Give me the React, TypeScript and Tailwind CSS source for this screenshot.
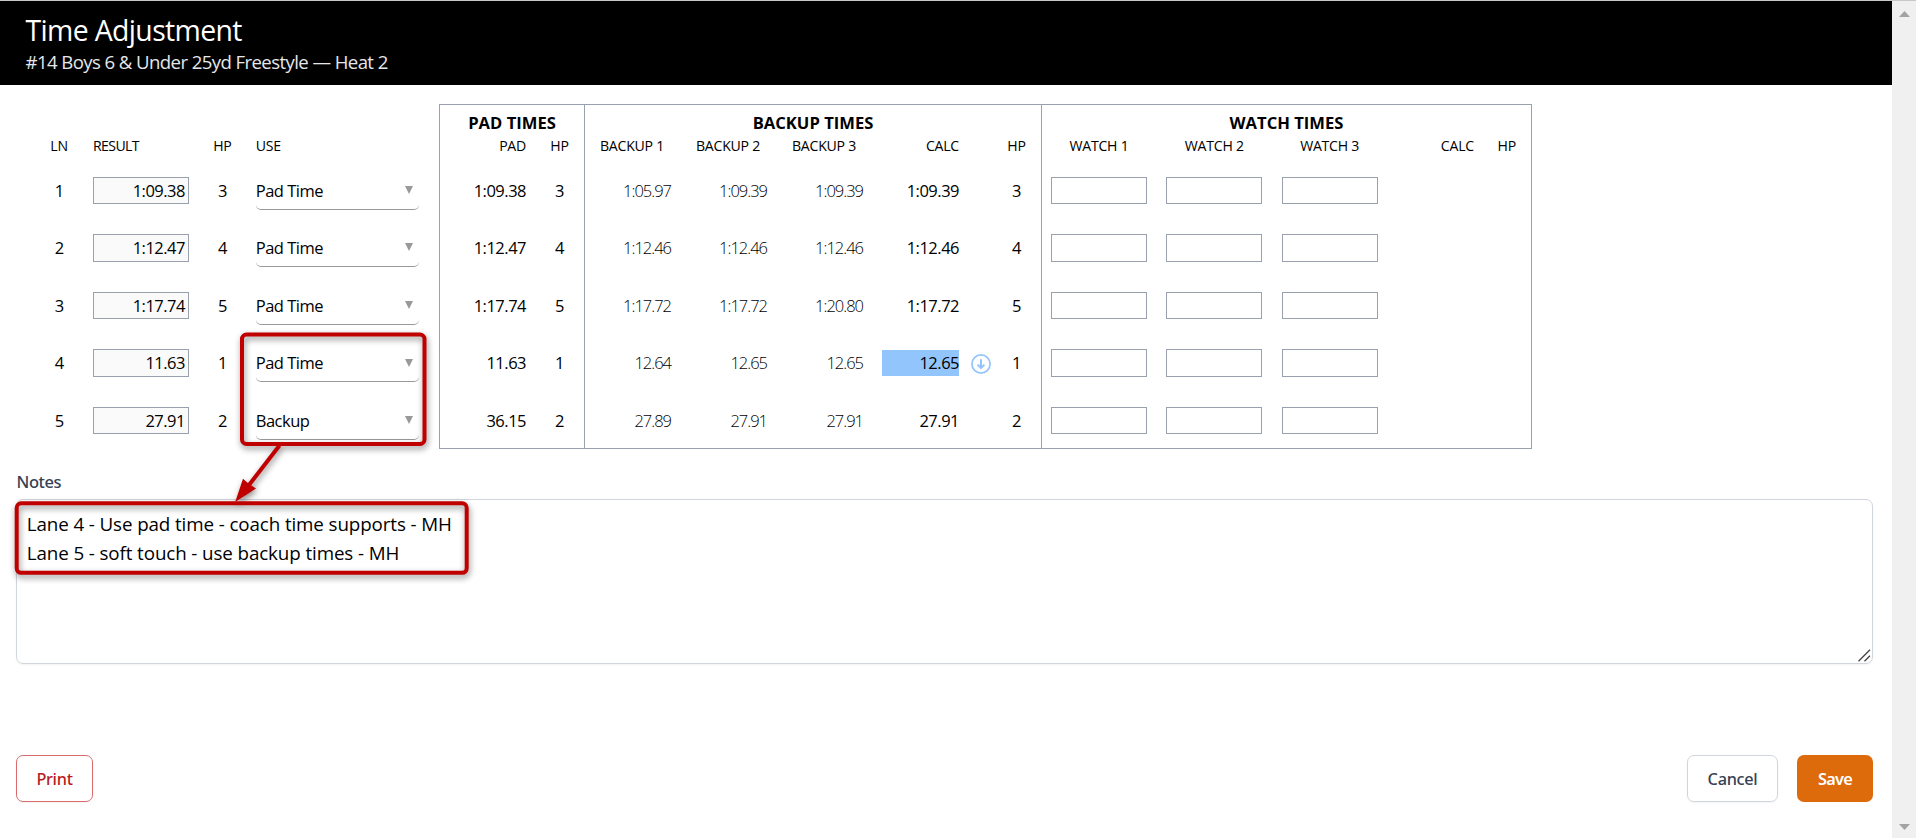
import React from "react";

type Lane = {
  ln: number;
  result: string;
  hp: number;
  use: string;
  pad: string;
  backups: [string, string, string];
  calc: string;
  flagged?: boolean;
};

const lanes: Lane[] = [
  { ln: 1, result: "1:09.38", hp: 3, use: "Pad Time", pad: "1:09.38", backups: ["1:05.97", "1:09.39", "1:09.39"], calc: "1:09.39" },
  { ln: 2, result: "1:12.47", hp: 4, use: "Pad Time", pad: "1:12.47", backups: ["1:12.46", "1:12.46", "1:12.46"], calc: "1:12.46" },
  { ln: 3, result: "1:17.74", hp: 5, use: "Pad Time", pad: "1:17.74", backups: ["1:17.72", "1:17.72", "1:20.80"], calc: "1:17.72" },
  { ln: 4, result: "11.63", hp: 1, use: "Pad Time", pad: "11.63", backups: ["12.64", "12.65", "12.65"], calc: "12.65", flagged: true },
  { ln: 5, result: "27.91", hp: 2, use: "Backup", pad: "36.15", backups: ["27.89", "27.91", "27.91"], calc: "27.91" },
];

const LEFT = "grid grid-cols-[33px_96px_32px_163px] gap-x-[17.4px] pl-[42.6px]";
const PAD = "grid grid-cols-[86px_33px] gap-x-[17px]";
const BACKUP = "grid grid-cols-[78px_96px_96px_96px_44px_27px] pl-2";
const WATCH = "grid grid-cols-[96px_96px_96px_77px_27px] gap-x-[19.3px] pl-[9px]";

const heading = "h-[23px] items-center text-[14.1px] leading-none tracking-[-0.25px]";
const row = "h-[57.6px] items-center text-[16.5px] leading-none tracking-[-0.5px]";

function Section({ title, className, children }: { title?: string; className: string; children: React.ReactNode }) {
  return (
    <section className={`h-[345px] shrink-0 border-t pt-[7px] ${className}`}>
      <h2 className="flex h-[23px] items-center justify-center text-[16.6px] leading-none font-bold">{title}</h2>
      {children}
    </section>
  );
}

function Caret() {
  return (
    <svg className="mr-[6px] mb-[2px] size-2" viewBox="0 0 8 8">
      <path d="M0 0h8L4 8z" fill="#999" />
    </svg>
  );
}

function Annotations() {
  return (
    <svg className="pointer-events-none absolute top-0 left-0 h-[620px] w-[500px]" viewBox="0 0 500 620" fill="none">
      <g stroke="#c00000" strokeWidth="4" style={{ filter: "drop-shadow(1px 3px 3px rgba(0,0,0,0.45))" }}>
        <rect x="242" y="334.5" width="182.5" height="109.5" rx="4.5" />
        <rect x="16.7" y="503.3" width="450" height="69.5" rx="4.5" />
        <path d="M279.5 445.5L249 485" />
        <path d="M235.2 502l7.8-23.2 5.4 4.8 7.6 5z" fill="#c00000" stroke="none" />
      </g>
    </svg>
  );
}

export default function App() {
  return (
    <div className="relative flex h-[838px] w-full flex-col overflow-hidden border-t border-[#c8c8c8] bg-white font-['Open_Sans','Noto_Sans',sans-serif] text-black">
      <div className="flex min-h-0 flex-1">
        <main className="flex min-w-0 flex-1 flex-col">
          <header className="h-[84px] shrink-0 bg-black pl-[25.5px] text-white">
            <h1 className="pt-[12px] text-[28.4px] leading-[34px] tracking-[-0.63px]">Time Adjustment</h1>
            <p className="text-[18.6px] leading-[29px] tracking-[-0.59px] text-gray-200">
              #14 Boys 6 &amp; Under 25yd Freestyle — Heat 2
            </p>
          </header>

          <div className="flex pt-[19px]">
            <Section className="w-[439px] border-transparent">
              <div className={`${LEFT} ${heading}`}>
                <span className="text-center">LN</span>
                <span className="tracking-[-0.6px]">RESULT</span>
                <span className="text-center">HP</span>
                <span>USE</span>
              </div>
              <div className="pt-[3.5px]">
                {lanes.map((l) => (
                  <div key={l.ln} className={`${LEFT} ${row}`}>
                    <span className="pt-px text-center">{l.ln}</span>
                    <span className="flex h-[27.4px] items-center justify-end border border-gray-400 bg-[#fafafa] pt-px pr-[3px]">{l.result}</span>
                    <span className="pt-px text-center">{l.hp}</span>
                    <span className="flex h-[38.6px] items-center justify-between rounded-[5px] border-b border-[#999] pt-[2px]">
                      {l.use}
                      <Caret />
                    </span>
                  </div>
                ))}
              </div>
            </Section>

            <Section title="PAD TIMES" className="w-[145px] border-b border-l border-gray-400">
              <div className={`${PAD} ${heading}`}>
                <span className="text-right">PAD</span>
                <span className="text-center">HP</span>
              </div>
              <div className="pt-[3.5px]">
                {lanes.map((l) => (
                  <div key={l.ln} className={`${PAD} ${row}`}>
                    <span className="pt-px text-right">{l.pad}</span>
                    <span className="pt-px text-center">{l.hp}</span>
                  </div>
                ))}
              </div>
            </Section>

            <Section title="BACKUP TIMES" className="w-[457px] border-b border-l border-gray-400">
              <div className={`${BACKUP} ${heading}`}>
                <span className="text-center">BACKUP 1</span>
                <span className="pl-[18px] text-center">BACKUP 2</span>
                <span className="pl-[18px] text-center">BACKUP 3</span>
                <span className="text-right">CALC</span>
                <span />
                <span className="text-center">HP</span>
              </div>
              <div className="pt-[3.5px]">
                {lanes.map((l) => (
                  <div key={l.ln} className={`${BACKUP} ${row}`}>
                    {l.backups.map((t, i) => (
                      <span key={i} className="pt-px text-right font-light tracking-[-1px]">
                        {t}
                      </span>
                    ))}
                    <span className={`flex h-[26px] w-[77px] items-center justify-end justify-self-end pt-px ${l.flagged ? "bg-[#93c5fd]" : ""}`}>{l.calc}</span>
                    <span className="flex justify-center">
                      {l.flagged && (
                        <svg className="mt-[2px] size-5" viewBox="0 0 20 20" fill="none" stroke="#93c5fd" strokeWidth="1.7">
                          <circle cx="10" cy="10" r="9.1" />
                          <path d="M10 5.3v8.4M6.6 10.6l3.4 3.4 3.4-3.4" strokeWidth="2" />
                        </svg>
                      )}
                    </span>
                    <span className="pt-px text-center">{l.hp}</span>
                  </div>
                ))}
              </div>
            </Section>

            <Section title="WATCH TIMES" className="w-[491px] border-x border-b border-gray-400">
              <div className={`${WATCH} ${heading}`}>
                <span className="text-center">WATCH 1</span>
                <span className="text-center">WATCH 2</span>
                <span className="text-center">WATCH 3</span>
                <span className="text-right">CALC</span>
                <span className="text-center">HP</span>
              </div>
              <div className="pt-[3.5px]">
                {lanes.map((l) => (
                  <div key={l.ln} className={`${WATCH} ${row}`}>
                    <span className="h-[27.4px] border border-gray-400" />
                    <span className="h-[27.4px] border border-gray-400" />
                    <span className="h-[27.4px] border border-gray-400" />
                  </div>
                ))}
              </div>
            </Section>
          </div>

          <div className="px-4 pr-[19px] pt-[21px]">
            <div className="h-[29px] pl-[0.5px] font-['Noto_Sans',sans-serif] text-[16.5px] leading-[24px] font-medium tracking-[-0.4px] text-gray-700">Notes</div>
            <div className="relative h-[165px] rounded-[7px] border border-gray-300 px-[9.8px] pt-[10px] text-[18.8px] leading-[28.8px] tracking-[-0.11px] whitespace-pre-line shadow-xs">
              {"Lane 4 - Use pad time - coach time supports - MH\nLane 5 - soft touch - use backup times - MH"}
              <svg className="absolute right-[1px] bottom-[1px] size-[13px]" viewBox="0 0 13 13" stroke="#444" strokeWidth="1.3">
                <path d="M0.5 12.2L12 0.7M6.5 12.2L12 6.7" />
              </svg>
            </div>
          </div>

          <div className="flex gap-[19px] pt-[91px] pr-[19px] pl-4 font-['Noto_Sans',sans-serif] text-[16.3px] font-medium tracking-[-0.3px]">
            <button className="mr-auto h-[47px] w-[77px] rounded-[7px] border border-[#d96c6c] pt-px text-[#b91c1c] shadow-xs">Print</button>
            <button className="h-[47px] w-[91px] rounded-[7px] border border-gray-300 pt-px text-gray-700 shadow-xs">Cancel</button>
            <button className="h-[47px] w-[76px] rounded-[7px] bg-[#dd6b0c] pt-px font-semibold tracking-[-0.7px] text-white">Save</button>
          </div>
        </main>

        <div className="flex w-6 shrink-0 flex-col items-center justify-between bg-[#f0f0f0] pt-[10px] pb-[8px]">
          <svg className="h-[6px] w-[11px]" viewBox="0 0 11 6">
            <path d="M0 6L5.5 0 11 6z" fill="#a3a3a3" />
          </svg>
          <svg className="h-[6px] w-[11px]" viewBox="0 0 11 6">
            <path d="M0 0L5.5 6 11 0z" fill="#a3a3a3" />
          </svg>
        </div>
      </div>
      <div className="absolute -top-px left-0">
        <Annotations />
      </div>
    </div>
  );
}
